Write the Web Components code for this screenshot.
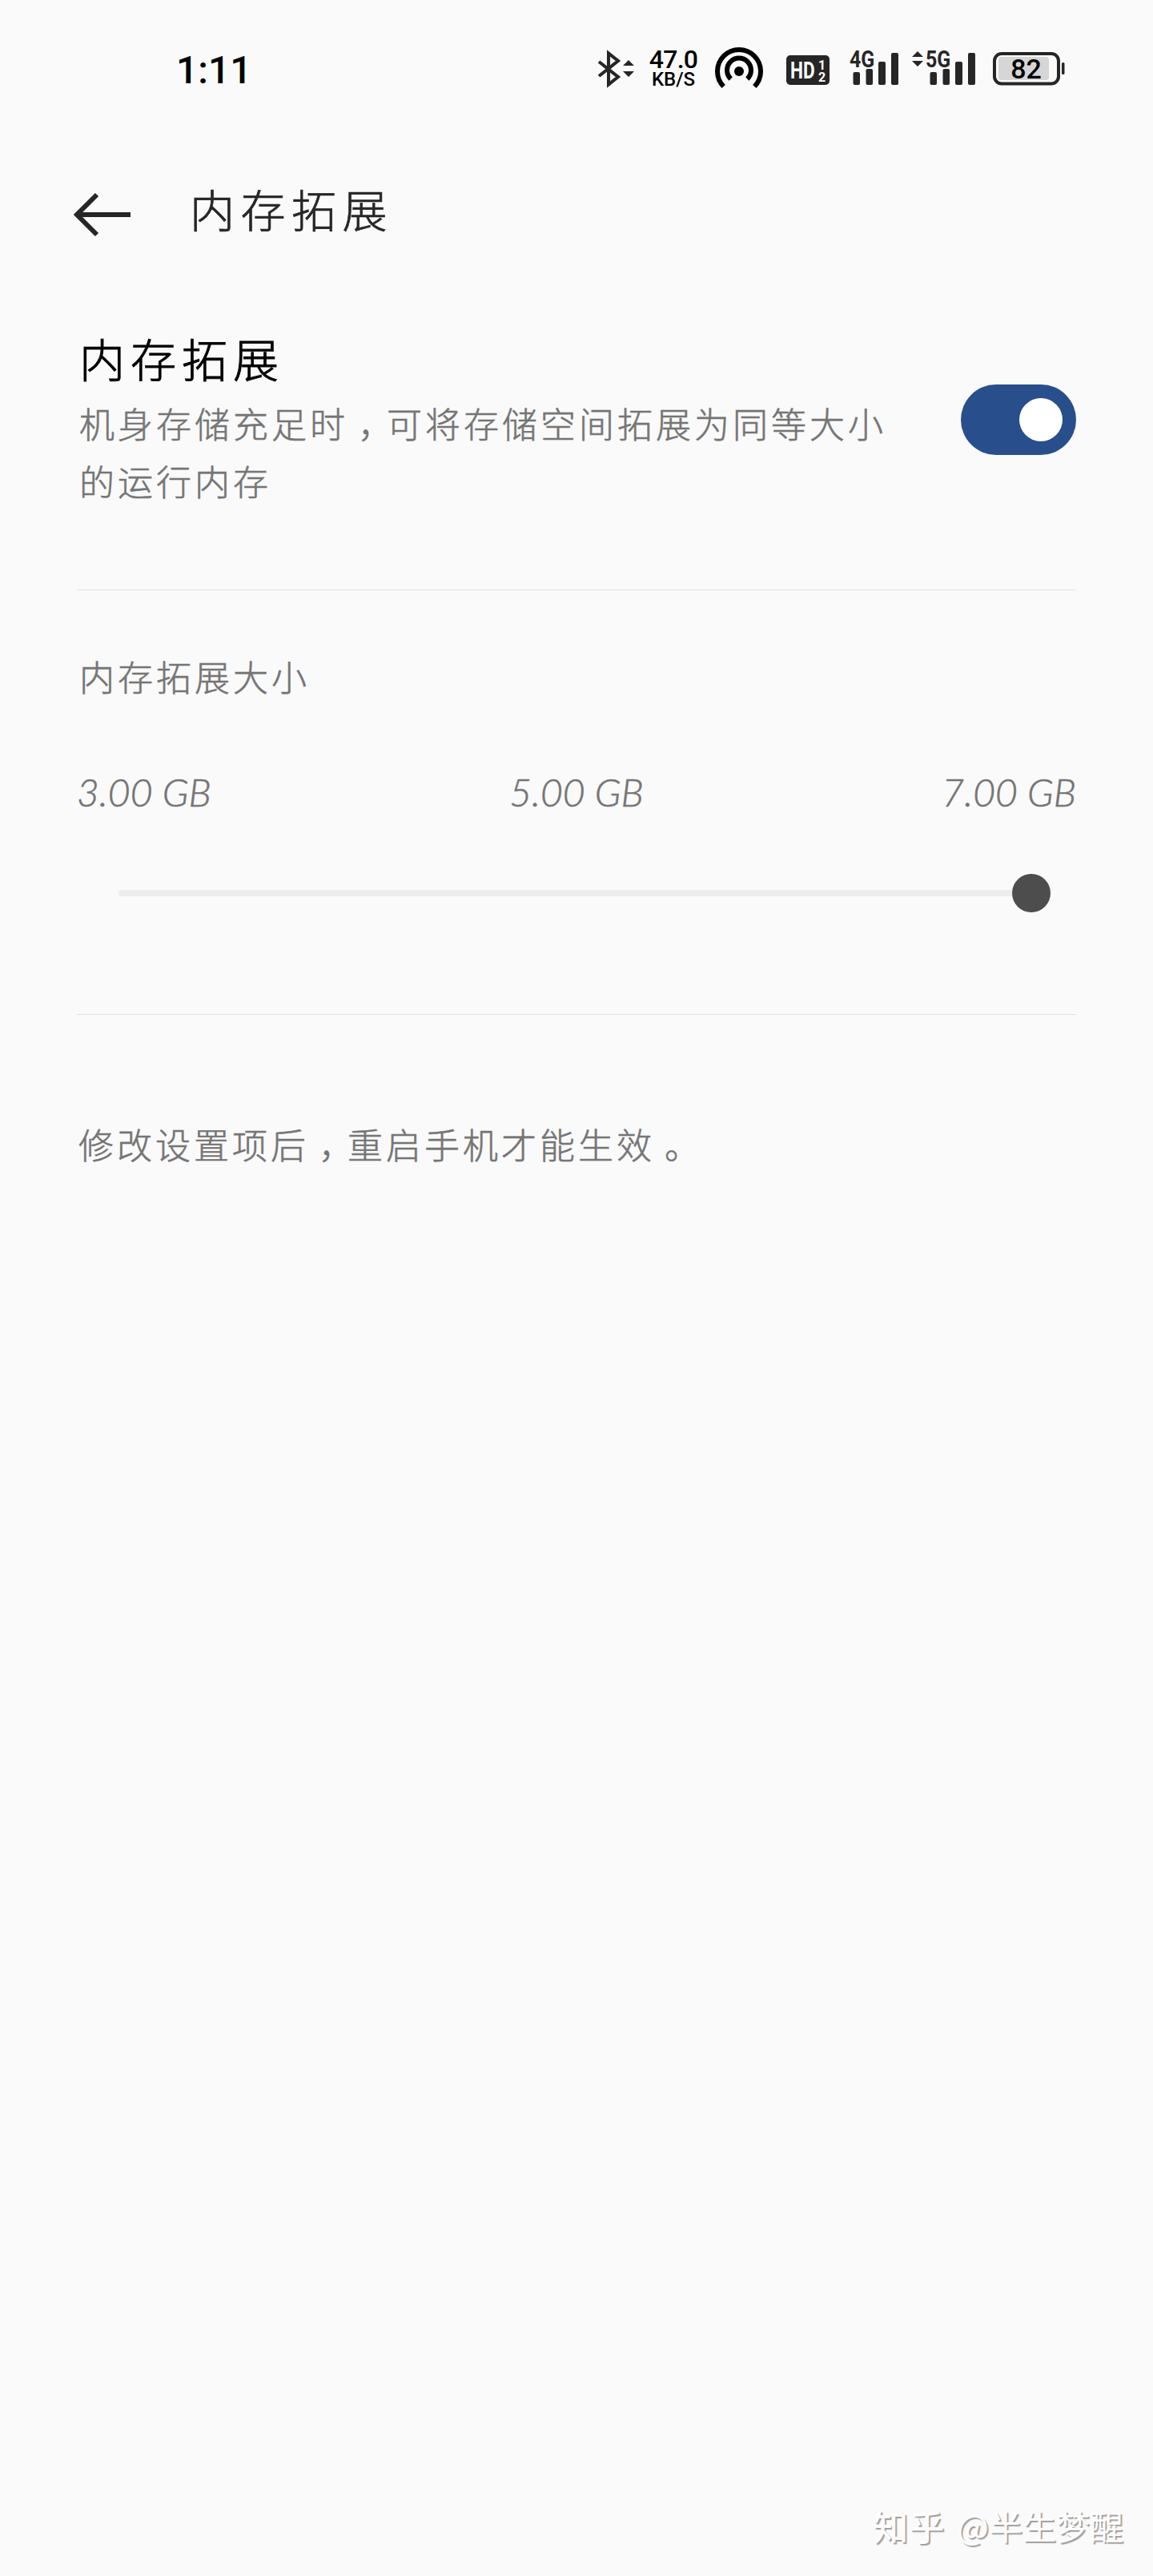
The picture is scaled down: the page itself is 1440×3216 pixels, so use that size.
<!DOCTYPE html>
<html lang="zh-CN">
<head>
<meta charset="utf-8">
<title>内存拓展</title>
<style>
  html, body { margin: 0; background: #fafafa; }
  body {
    --ink: #262626;
    --text-secondary: #757575;
    --accent: #284f8c;
    --line: #e2e2e2;
    --font-ui: Roboto, "Liberation Sans", sans-serif;
    --font-cjk: "Noto Sans CJK SC", sans-serif;
    font-family: var(--font-cjk);
  }
  /* centres full-width punctuation in its cell */
  .punct { margin: 0 -12px 0 12px; }
</style>
</head>
<body>
<memory-page>
  <status-bar time="1:11" speed="47.0" battery="82"></status-bar>
  <app-bar>内存拓展</app-bar>
  <setting-row>
    <span slot="title">内存拓展</span>
    机身存储充足时<span class="punct">，</span>可将存储空间拓展为同等大小的运行内存
    <toggle-switch slot="control"></toggle-switch>
  </setting-row>
  <size-slider min="3.00 GB" mid="5.00 GB" max="7.00 GB">内存拓展大小</size-slider>
  <foot-note>修改设置项后<span class="punct">，</span>重启手机才能生效<span class="punct">。</span></foot-note>
  <water-mark brand="知乎">@半生梦醒</water-mark>
</memory-page>

<script>
class BaseElement extends HTMLElement {
  constructor() {
    super();
    this.attachShadow({ mode: 'open' });
  }

  connectedCallback() {
    this.shadowRoot.innerHTML = this.render();
  }
}

class MemoryPage extends BaseElement {
  render() {
    return `
      <style>
        :host {
          display: flex;
          flex-direction: column;
          width: 1440px;
          height: 3216px;
          background: #fafafa;
          overflow: hidden;
        }
      </style>
      <slot></slot>
    `;
  }
}

class StatusBar extends BaseElement {
  render() {
    return `
      <style>
        :host {
          display: flex;
          align-items: center;
          box-sizing: border-box;
          height: 172px;
          padding: 0 110px 0 220px;
          font-family: var(--font-ui);
          color: #000;
        }
        .time { font-size: 48px; font-weight: 500; line-height: 56px; margin-top: 3px; }
        .icons { display: flex; align-items: center; margin-left: auto; }
        svg { display: block; height: 56px; fill: var(--ink); }
        svg text { font-family: var(--font-ui); }
        .speed {
          display: flex;
          flex-direction: column;
          align-items: center;
          width: 62px;
          margin: 0 21px 0 18px;
          font-weight: 500;
          white-space: nowrap;
        }
        .speed b { font: inherit; font-size: 32px; line-height: 26px; letter-spacing: -0.8px; }
        .speed i { font: inherit; font-size: 24px; line-height: 24px; }
        .hotspot { margin-right: 29px; }
        .hd { margin-right: 25px; }
        .net4 { margin-right: 15px; }
        .net5 { margin-right: 21px; }
      </style>
      <span class="time">${this.getAttribute('time')}</span>
      <div class="icons">
        <svg width="46" viewBox="746 58 46 56">
          <path d="M748 77 L772 96 L760 105.500 V66.500 L772 76 L748 95" fill="none" stroke="#262626" stroke-width="4"/>
          <path d="M778 82 L785 75 L792 82Z M778 89 H792 L785 96Z"/>
        </svg>
        <div class="speed"><b>${this.getAttribute('speed')}</b><i>KB/S</i></div>
        <svg class="hotspot" width="60" viewBox="893 58 60 56">
          <g fill="none" stroke="#000" stroke-width="6">
            <path d="M903.700 108 A27 27 0 1 1 942.300 108"/>
            <path d="M912.700 98.500 A15 15 0 1 1 933.300 98.500"/>
          </g>
          <circle cx="923" cy="89" r="6" fill="#000"/>
        </svg>
        <svg class="hd" width="54" viewBox="982 58 54 56">
          <rect x="982" y="69" width="54" height="37" rx="5"/>
          <g fill="#fff" font-weight="700">
            <text transform="translate(987 98) scale(.78 1)" font-size="29">HD</text>
            <text x="1022" y="87" font-size="16">1</text>
            <text x="1022" y="102" font-size="16">2</text>
          </g>
        </svg>
        <svg class="net4" width="62" viewBox="1061 58 62 56">
          <text transform="translate(1061 84) scale(.86 1)" font-size="29" font-weight="700">4G</text>
          <rect x="1065.500" y="90" width="8.500" height="16" rx="2"/>
          <rect x="1081.500" y="86" width="8.500" height="20" rx="2"/>
          <rect x="1097" y="77" width="9" height="29" rx="2"/>
          <rect x="1113" y="66" width="9" height="40" rx="2"/>
        </svg>
        <svg class="net5" width="81" viewBox="1138 58 81 56">
          <path d="M1139 71 L1146 64 L1153 71Z M1139 76 H1153 L1146 83Z"/>
          <text transform="translate(1156 84) scale(.86 1)" font-size="29" font-weight="700">5G</text>
          <rect x="1161.500" y="90" width="8.500" height="16" rx="2"/>
          <rect x="1177.500" y="86" width="8.500" height="20" rx="2"/>
          <rect x="1193" y="77" width="9" height="29" rx="2"/>
          <rect x="1209" y="66" width="9" height="40" rx="2"/>
        </svg>
        <svg width="90" viewBox="1240 58 90 56">
          <rect x="1242" y="67" width="80" height="37.500" rx="9" fill="none" stroke="#262626" stroke-width="4"/>
          <rect x="1247" y="71" width="63" height="29" rx="4" fill="#d6d6d6"/>
          <rect x="1326" y="78" width="3.500" height="15" rx="1.500"/>
          <text x="1281.500" y="98" font-size="34" font-weight="500" fill="#000" text-anchor="middle">${this.getAttribute('battery')}</text>
        </svg>
      </div>
    `;
  }
}

class AppBar extends BaseElement {
  render() {
    return `
      <style>
        :host {
          display: flex;
          align-items: center;
          gap: 73px;
          height: 184px;
          padding-left: 92px;
          color: var(--ink);
        }
        svg { display: block; }
        h1 {
          margin: 0 0 9px;
          font-size: 56px;
          font-weight: 300;
          line-height: 80px;
          letter-spacing: 7.500px;
          -webkit-text-stroke: 0.7px;
        }
      </style>
      <svg width="72" height="64" viewBox="92 232 72 64">
        <path d="M121 243 L96 268 L121 293 M96 268 H163" fill="none" stroke="#262626" stroke-width="6"/>
      </svg>
      <h1><slot></slot></h1>
    `;
  }
}

class SettingRow extends BaseElement {
  render() {
    return `
      <style>
        :host {
          display: flex;
          justify-content: space-between;
          align-items: center;
          margin: 0 96px;
          padding: 50px 0 100px;
          border-bottom: 1px solid var(--line);
        }
        .text { width: 1016px; padding-left: 3px; }
        .title {
          font-size: 57px;
          font-weight: 300;
          line-height: 80px;
          letter-spacing: 7px;
          color: #000;
          -webkit-text-stroke: 0.9px;
        }
        .desc {
          margin-top: 6px;
          font-size: 44px;
          font-weight: 300;
          line-height: 72px;
          letter-spacing: 4px;
          color: var(--text-secondary);
          -webkit-text-stroke: 0.6px;
        }
      </style>
      <div class="text">
        <div class="title"><slot name="title"></slot></div>
        <div class="desc"><slot></slot></div>
      </div>
      <slot name="control"></slot>
    `;
  }
}

class ToggleSwitch extends BaseElement {
  render() {
    return `
      <style>
        :host {
          display: flex;
          justify-content: flex-end;
          align-items: center;
          box-sizing: border-box;
          width: 144px;
          height: 88px;
          margin-top: 6px;
          padding-right: 17px;
          border-radius: 44px;
          background: var(--accent);
        }
        .knob { width: 54px; height: 54px; border-radius: 50%; background: #fff; }
      </style>
      <div class="knob"></div>
    `;
  }
}

class SizeSlider extends BaseElement {
  render() {
    return `
      <style>
        :host {
          display: block;
          box-sizing: border-box;
          height: 530px;
          margin: 0 96px;
          padding-top: 77px;
          border-bottom: 1px solid var(--line);
          color: var(--text-secondary);
        }
        .label {
          padding-left: 3px;
          font-size: 44px;
          font-weight: 300;
          line-height: 60px;
          letter-spacing: 4px;
          -webkit-text-stroke: 0.6px;
        }
        .marks {
          display: flex;
          justify-content: space-between;
          margin-top: 85px;
          font: italic 300 48px/60px Lato, "Liberation Sans", sans-serif;
          -webkit-text-stroke: 0.6px;
        }
        .slider { display: flex; align-items: center; margin: 72px 32px 0 52px; }
        .track {
          flex: 1;
          height: 8px;
          border-radius: 4px 0 0 4px;
          background: #ededed;
        }
        .thumb { width: 48px; height: 48px; border-radius: 50%; background: #4d4d4d; }
      </style>
      <div class="label"><slot></slot></div>
      <div class="marks">
        <span>${this.getAttribute('min')}</span>
        <span>${this.getAttribute('mid')}</span>
        <span>${this.getAttribute('max')}</span>
      </div>
      <div class="slider"><div class="track"></div><div class="thumb"></div></div>
    `;
  }
}

class FootNote extends BaseElement {
  render() {
    return `
      <style>
        :host {
          display: block;
          padding: 131px 96px 0 98px;
          font-size: 44px;
          font-weight: 300;
          line-height: 60px;
          letter-spacing: 4px;
          color: var(--text-secondary);
          -webkit-text-stroke: 0.6px;
        }
      </style>
      <slot></slot>
    `;
  }
}

class WaterMark extends BaseElement {
  render() {
    return `
      <style>
        :host {
          display: flex;
          justify-content: flex-end;
          align-items: center;
          gap: 15px;
          margin-top: auto;
          padding: 0 37px 33px 0;
          font-size: 42px;
          line-height: 60px;
          color: #fdfdfd;
          text-shadow: 2px 2px 1px #a0a0a0;
        }
        b { font-size: 44px; font-weight: 500; letter-spacing: 1px; }
      </style>
      <b>${this.getAttribute('brand')}</b>
      <span><slot></slot></span>
    `;
  }
}

customElements.define('memory-page', MemoryPage);
customElements.define('status-bar', StatusBar);
customElements.define('app-bar', AppBar);
customElements.define('setting-row', SettingRow);
customElements.define('toggle-switch', ToggleSwitch);
customElements.define('size-slider', SizeSlider);
customElements.define('foot-note', FootNote);
customElements.define('water-mark', WaterMark);
</script>
</body>
</html>
